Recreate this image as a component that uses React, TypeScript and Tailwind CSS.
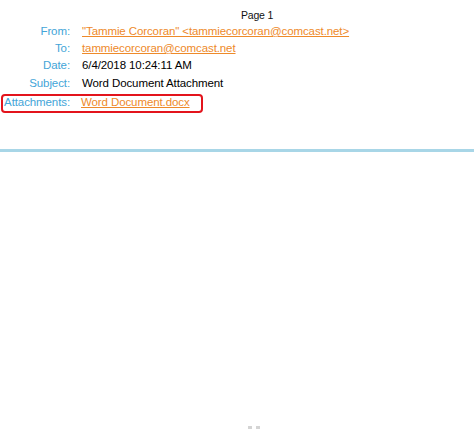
export default function App() {
  const rows: { label: string; value: string; link?: boolean; mt: string }[] = [
    { label: "From:", value: '"Tammie Corcoran" <tammiecorcoran@comcast.net>', link: true, mt: "mt-[3px]" },
    { label: "To:", value: "tammiecorcoran@comcast.net", link: true, mt: "mt-[4px]" },
    { label: "Date:", value: "6/4/2018 10:24:11 AM", mt: "mt-[4px]" },
    { label: "Subject:", value: "Word Document Attachment", mt: "mt-[5px]" },
  ];

  return (
    <div className="w-[474px] h-[429px] bg-white overflow-hidden relative font-['Liberation_Sans',Arial,sans-serif] text-[11.5px] leading-[13px] tracking-[-0.1px]">
      <div className="pt-[9px]">
        <div className="pl-[241px] text-[#111] text-[10.5px] tracking-[-0.2px]">Page 1</div>

        {rows.map((r) => (
          <div key={r.label} className={`grid grid-cols-[70px_1fr] gap-x-[12px] ${r.mt}`}>
            <span className="text-right text-[#43a5d8]">{r.label}</span>
            <span className={r.link ? "text-[#ee8a2a] underline underline-offset-1" : "text-black"}>
              {r.value}
            </span>
          </div>
        ))}

        {/* attachments row, highlighted */}
        <div className="mt-[4px] ml-[1px] w-[202px] h-[19px] border-2 border-[#e3141c] rounded-[4px]">
          <div className="grid grid-cols-[67px_1fr] gap-x-[11px]">
            <span className="text-right text-[#43a5d8]">Attachments:</span>
            <span className="text-[#ee8a2a] underline underline-offset-1">Word Document.docx</span>
          </div>
        </div>

        <div className="mt-[36px] h-[3px] bg-[#a8d6e7]" />
      </div>

      {/* tiny scroll marks at bottom */}
      <div className="absolute bottom-0 left-[248px] flex gap-[4px]">
        <div className="w-[4px] h-[3px] bg-[#d4d4d4]" />
        <div className="w-[4px] h-[3px] bg-[#d4d4d4]" />
      </div>
    </div>
  );
}
